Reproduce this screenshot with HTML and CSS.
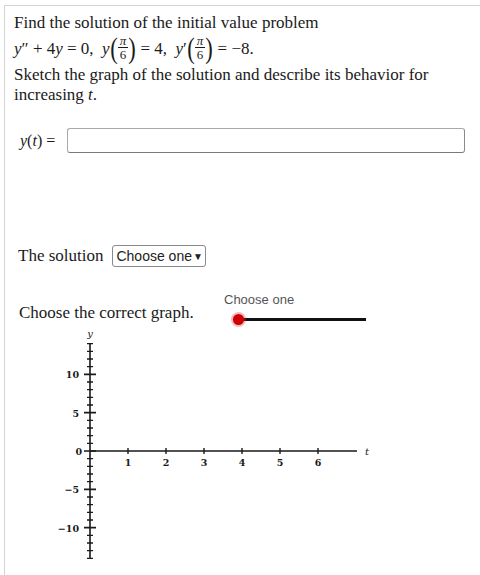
FILE: index.html
```html
<!DOCTYPE html>
<html>
<head>
<meta charset="utf-8">
<link rel="stylesheet" href="styles.css">
</head>
<body>
<div class="panel">
  <div class="question">
    <p class="line">Find the solution of the initial value problem</p>
    <p class="line eq"><i>y</i>″ + 4<i>y</i> = 0,&nbsp;&nbsp;<i>y</i><span class="paren">(</span><span class="frac"><span class="num"><i>π</i></span><span class="den">6</span></span><span class="paren">)</span> = 4,&nbsp;&nbsp;<i>y</i>′<span class="paren">(</span><span class="frac"><span class="num"><i>π</i></span><span class="den">6</span></span><span class="paren">)</span> = −8.</p>
    <p class="line">Sketch the graph of the solution and describe its behavior for</p>
    <p class="line">increasing <i>t</i>.</p>
  </div>

  <div class="answer-row">
    <span class="label"><i>y</i>(<i>t</i>) =</span>
    <span class="input"></span>
  </div>

  <div class="solution-row">
    <span class="label">The solution</span>
    <span class="select">Choose one<span class="caret">▼</span></span>
  </div>

  <div class="graph-row">
    <span class="graph-prompt">Choose the correct graph.</span>
    <div class="slider">
      <span class="slider-label">Choose one</span>
      <div class="track"><span class="knob"></span></div>
    </div>
  </div>

  <svg class="graph" width="340" height="240" viewBox="0 0 340 240">
    <g transform="translate(39,123)" stroke="#1a1a1a" fill="none">
      <path stroke-width="1.6" d="M0,-107.33V107.33 M0,0H267"/>
      <path stroke-width="1.4" d="M-3,-7.67h6 M-3,-15.33h6 M-3,-23h6 M-3,-30.67h6 M-3,-46h6 M-3,-53.67h6 M-3,-61.33h6 M-3,-69h6 M-3,-84.33h6 M-3,-92h6 M-3,-99.67h6 M-3,-107.33h6 M-3,7.67h6 M-3,15.33h6 M-3,23h6 M-3,30.67h6 M-3,46h6 M-3,53.67h6 M-3,61.33h6 M-3,69h6 M-3,84.33h6 M-3,92h6 M-3,99.67h6 M-3,107.33h6"/>
      <path stroke-width="1.6" d="M-6,0h12 M-6,-38.33h12 M-6,-76.67h12 M-6,38.33h12 M-6,76.67h12"/>
      <path stroke-width="1.4" d="M38,-3v6 M76,-3v6 M114,-3v6 M152,-3v6 M190,-3v6 M228,-3v6"/>
    </g>
    <g transform="translate(39,123)" fill="#1a1a1a" class="ticklabels">
      <text x="-11" y="-73" text-anchor="end">10</text>
      <text x="-11" y="-34.5" text-anchor="end">5</text>
      <text x="-8" y="3.5" text-anchor="end">0</text>
      <text x="-11" y="42" text-anchor="end">−5</text>
      <text x="-11" y="80.5" text-anchor="end">−10</text>
      <text x="38" y="15" text-anchor="middle">1</text>
      <text x="76" y="15" text-anchor="middle">2</text>
      <text x="114" y="15" text-anchor="middle">3</text>
      <text x="152" y="15" text-anchor="middle">4</text>
      <text x="190" y="15" text-anchor="middle">5</text>
      <text x="228" y="15" text-anchor="middle">6</text>
      <text x="277" y="4" class="axisname" text-anchor="middle">t</text>
      <text x="0" y="-114" class="axisname" text-anchor="middle">y</text>
    </g>
  </svg>
</div>
</body>
</html>
```

FILE: styles.css
```css
html, body {
  margin: 0;
  padding: 0;
  background: #fff;
}
body {
  font-family: "Liberation Serif", "Times New Roman", serif;
  color: #1a1a1a;
  font-size: 17px;
}
.panel {
  margin: 5px 0 0 4px;
  border-left: 1px solid #d4d4d4;
  border-top: 1px solid #d4d4d4;
  height: 575px;
  padding: 7px 0 0 9px;
  box-sizing: border-box;
}
.question .line {
  margin: 0;
  line-height: 20px;
}
.question .eq {
  line-height: 32px;
  height: 32px;
  white-space: nowrap;
}
.paren {
  font-size: 30px;
  line-height: 28px;
  display: inline-block;
  vertical-align: middle;
  transform: scaleX(0.75) translateY(-2px);
  margin: 0 -1px;
}
.frac {
  display: inline-flex;
  flex-direction: column;
  align-items: center;
  vertical-align: middle;
  font-size: 13px;
  line-height: 12px;
  transform: translateY(-2px);
}
.frac .num {
  border-bottom: 1px solid #1a1a1a;
  padding: 0 2px;
}
.frac .den {
  padding-top: 1px;
}
.answer-row {
  display: flex;
  align-items: center;
  margin-top: 23px;
  padding-left: 6px;
}
.answer-row .label {
  font-size: 16px;
  width: 47px;
}
.input {
  width: 398px;
  height: 25px;
  box-sizing: border-box;
  border: 1px solid #a8a8a8;
  border-bottom-color: #7a7a7a;
  border-right-color: #8a8a8a;
  border-radius: 3px;
}
.solution-row {
  display: flex;
  align-items: center;
  margin-top: 92px;
  padding-left: 4px;
}
.solution-row .label {
  margin-right: 9px;
}
.select {
  font-family: "Liberation Sans", Arial, sans-serif;
  font-size: 14px;
  color: #222;
  height: 22px;
  box-sizing: border-box;
  border: 1px solid #8a8a8a;
  border-radius: 3px;
  padding: 0 2px 0 3px;
  display: flex;
  align-items: center;
}
.caret {
  font-size: 10px;
  margin-left: 1px;
}
.graph-row {
  display: flex;
  align-items: flex-start;
  margin-top: 25px;
  padding-left: 5px;
}
.graph-prompt {
  margin-top: 11px;
  line-height: 20px;
  width: 205px;
}
.slider {
  display: flex;
  flex-direction: column;
}
.slider-label {
  font-family: "Liberation Sans", Arial, sans-serif;
  font-size: 13px;
  color: #555;
  line-height: 16px;
}
.track {
  position: relative;
  margin-top: 10px;
  margin-left: 15px;
  width: 127px;
  height: 3px;
  background: #111;
}
.knob {
  position: absolute;
  left: -6px;
  top: -4px;
  width: 11px;
  height: 11px;
  border-radius: 50%;
  background: #d00000;
  box-shadow: 0 0 0 2px rgba(220, 60, 60, 0.35);
}
.graph {
  display: block;
  margin: 5px 0 0 37px;
}
.ticklabels text {
  font-family: "DejaVu Serif", serif;
  font-size: 9.5px;
  font-weight: bold;
}
.ticklabels .axisname {
  font-style: italic;
  font-weight: normal;
  font-size: 10px;
}
```
